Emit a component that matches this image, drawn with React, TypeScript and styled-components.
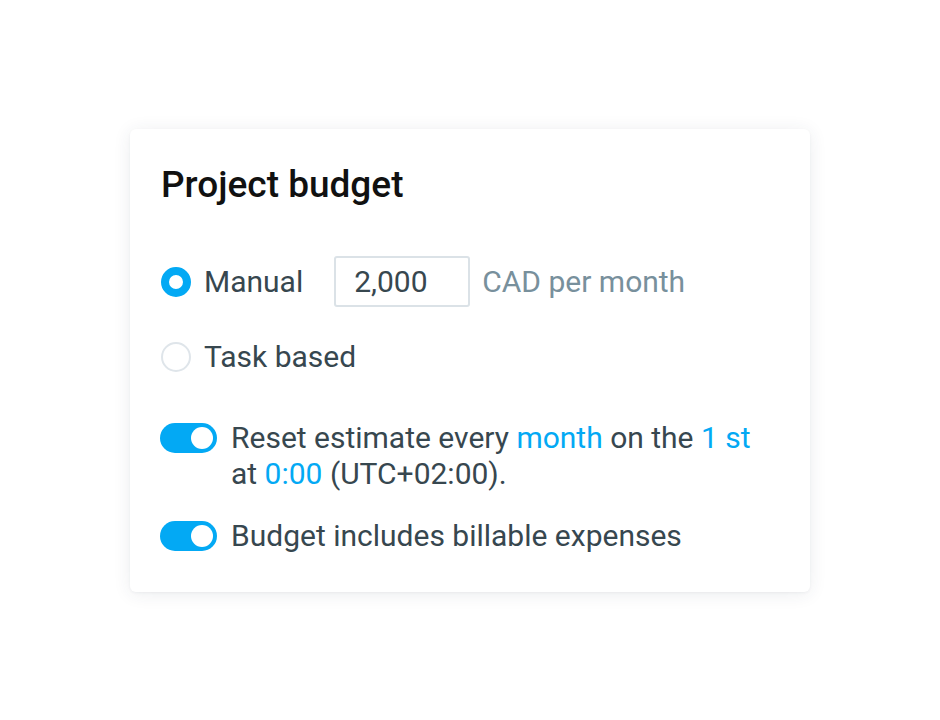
import React, { useState } from 'react'
import styled, { createGlobalStyle } from 'styled-components'

const GlobalStyle = createGlobalStyle`
    html, body {
        margin: 0;
        padding: 0;
        background: #ffffff;
        font-family: Roboto, "Liberation Sans", Arial, sans-serif;
    }
`

const Page = styled.div`
    display: flex;
    align-items: center;
    justify-content: center;
    min-height: 100vh;
`

const Card = styled.div`
    width: 680px;
    height: 463px;
    box-sizing: border-box;
    padding: 34px 30px 0 30px;
    background: #ffffff;
    border-radius: 6px;
    box-shadow: 0 2px 18px rgba(40, 60, 80, 0.09), 0 1px 3px rgba(40, 60, 80, 0.05);
    color: #37474f;
`

const Title = styled.h2`
    margin: 0 0 49px 1px;
    font-size: 37px;
    line-height: 44px;
    font-weight: 500;
    color: #111111;
`

const OptionRow = styled.label<{ gap?: number }>`
    display: flex;
    align-items: center;
    height: 52px;
    margin-bottom: ${(p) => p.gap ?? 0}px;
    font-size: 30px;
    cursor: pointer;
`

const Radio = styled.span<{ checked: boolean }>`
    box-sizing: border-box;
    width: 30px;
    height: 30px;
    margin-left: 1px;
    border-radius: 50%;
    flex-shrink: 0;
    border: ${(p) => (p.checked ? '8px solid #03a9f4' : '2px solid #dfe5ea')};
    background: #ffffff;
    margin-right: 13px;
`

const AmountInput = styled.input`
    box-sizing: border-box;
    width: 136px;
    height: 51px;
    margin: 0 12px 0 31px;
    padding: 0 18px;
    border: 2px solid #dbe2e7;
    border-radius: 3px;
    font-family: inherit;
    font-size: 30px;
    color: #37474f;
    outline: none;
`

const Unit = styled.span`
    color: #78909c;
`

const ToggleRow = styled.div<{ gap?: number }>`
    display: flex;
    align-items: flex-start;
    margin-top: ${(p) => p.gap ?? 0}px;
    font-size: 30px;
    line-height: 36px;
`

const Toggle = styled.button<{ on: boolean }>`
    position: relative;
    flex-shrink: 0;
    width: 57px;
    height: 30px;
    margin: 3px 14px 0 0;
    padding: 0;
    border: none;
    border-radius: 15px;
    background: ${(p) => (p.on ? '#03a9f4' : '#cfd8dc')};
    cursor: pointer;

    &::after {
        content: '';
        position: absolute;
        top: 4px;
        left: ${(p) => (p.on ? '31px' : '4px')};
        width: 22px;
        height: 22px;
        border-radius: 50%;
        background: #ffffff;
    }
`

const Link = styled.span`
    color: #03a9f4;
    cursor: pointer;
`

const App = () => {
    const [mode, setMode] = useState('manual')
    const [amount, setAmount] = useState('2,000')
    const [reset, setReset] = useState(true)
    const [expenses, setExpenses] = useState(true)

    return (
        <Page>
            <GlobalStyle />
            <Card>
                <Title>Project budget</Title>
                <OptionRow gap={23} onClick={() => setMode('manual')}>
                    <Radio checked={mode === 'manual'} />
                    Manual
                    <AmountInput value={amount} onChange={(e) => setAmount(e.target.value)} />
                    <Unit>CAD per month</Unit>
                </OptionRow>
                <OptionRow onClick={() => setMode('task')}>
                    <Radio checked={mode === 'task'} />
                    Task based
                </OptionRow>
                <ToggleRow gap={37}>
                    <Toggle on={reset} onClick={() => setReset(!reset)} />
                    <div>
                        Reset estimate every <Link>month</Link> on the <Link>1 st</Link>
                        <br />
                        at <Link>0:00</Link> (UTC+02:00).
                    </div>
                </ToggleRow>
                <ToggleRow gap={26}>
                    <Toggle on={expenses} onClick={() => setExpenses(!expenses)} />
                    <div>Budget includes billable expenses</div>
                </ToggleRow>
            </Card>
        </Page>
    )
}

export default App
